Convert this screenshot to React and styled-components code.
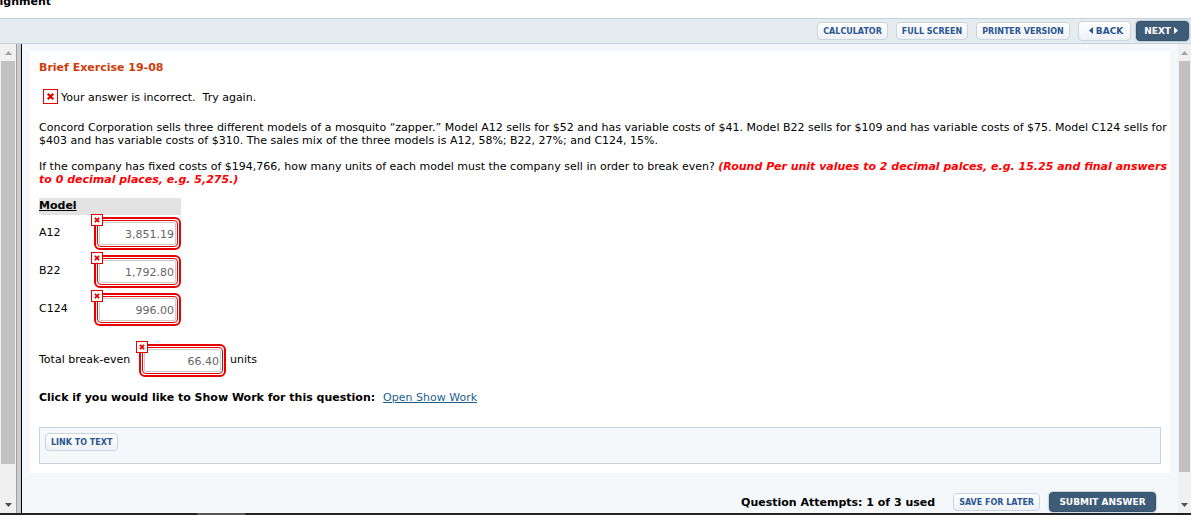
import React, { useState } from 'react';
import styled, { createGlobalStyle, css } from 'styled-components';

const GlobalStyle = createGlobalStyle`
    * {
        box-sizing: border-box;
    }

    body {
        margin: 0;
        background: #fff;
        color: #000;
        font: 11px/13px 'DejaVu Sans', Verdana, sans-serif;
    }

    h1, h2, p {
        margin: 0;
        font-size: 11px;
    }

    button, input {
        font-family: inherit;
    }
`;

const Page = styled.div`
    display: flex;
    flex-direction: column;
    min-height: 100vh;
`;

const TitleBar = styled.header`
    display: flex;
    justify-content: flex-end;
    width: 51px;
    height: 18px;
    overflow: hidden;

    h1 {
        line-height: 4px;
    }
`;

const Toolbar = styled.nav`
    display: flex;
    align-items: center;
    justify-content: flex-end;
    gap: 8px;
    height: 26px;
    padding: 0 2px;
    background: #e6ebef;
    border: solid #c6d1dc;
    border-width: 1px 0;
`;

const StepButtons = styled.div`
    display: flex;
    gap: 5px;
`;

const Button = styled.button`
    flex: none;
    height: 18px;
    padding: 1px 5px 0;
    border: 1px solid #cbd5e0;
    border-radius: 4px;
    background: linear-gradient(#fff, #eef1f5);
    color: #2a5591;
    font-size: 8px;
    font-weight: bold;
    line-height: 15px;
    white-space: nowrap;
    cursor: pointer;

    ${({ $large }) =>
        $large &&
        css`
            height: 20px;
            padding: 0 7px;
            font-size: 9px;
            line-height: 16px;
        `}

    ${({ $primary }) =>
        $primary &&
        css`
            border-color: #36536d;
            background: #3e5c78;
            box-shadow: 0 0 2px #6d88a1;
            color: #fff;
        `}
`;

const Arrow = styled.svg`
    width: 4px;
    height: 7px;
    margin: 0 3px;
    fill: currentColor;
`;

const Workspace = styled.div`
    display: flex;
    flex: 1;
`;

const ScrollTrack = styled.div`
    display: flex;
    flex-direction: column;
    flex: none;
    align-items: center;
    width: ${({ $width }) => $width}px;
    padding: 0 1px;
    background: #f0f0f0;

    svg {
        flex: none;
        width: 7px;
        height: 17px;
    }
`;

const ScrollThumb = styled.div`
    flex: 1;
    align-self: stretch;
    margin-bottom: ${({ $rest }) => $rest}px;
    background: #c1c1c1;
`;

const Splitter = styled.div`
    flex: none;
    width: 6px;
    background: #ccc;
    border-left: 1px solid #a0a0a0;
    border-right: 1px solid #000;
`;

const Main = styled.main`
    flex: 1;
    min-width: 0;
    padding: 7px 8px 0;
    background: #f5f8fb;
`;

const Card = styled.section`
    padding: 10px 0 9px 9px;
    background: #fff;
`;

const ExerciseTitle = styled.h2`
    color: #cf3c0b;
`;

const Feedback = styled.p`
    display: flex;
    align-items: flex-end;
    gap: 3px;
    margin: 15px 0 17px 4px;
    white-space: pre;
`;

const Cross = styled.svg`
    flex: none;
    width: ${({ $size }) => $size}px;
    height: ${({ $size }) => $size}px;
    background: #fff;
    border: 1px solid #e60000;
    stroke: #e60000;
    stroke-width: 1.6;
`;

const Question = styled.p`
    & + & {
        margin-top: 13px;
    }

    em {
        color: #f00;
        font-weight: bold;
    }
`;

const AnswerTable = styled.table`
    width: 142px;
    margin-top: 12px;
    border-collapse: collapse;

    th,
    td {
        padding: 0;
        text-align: left;
        font-weight: normal;
    }

    thead th {
        height: 17px;
        padding-bottom: 2px;
        background: #e3e3e3;
        font-weight: bold;
        text-decoration: underline;
    }

    tbody tr {
        height: 38px;
    }

    tbody th {
        padding-bottom: 4px;
    }

    td {
        width: 87px;
        padding-bottom: 1px;
    }
`;

const AnswerFrame = styled.span`
    position: relative;
    display: block;
    width: 87px;
    padding: 3px;
    border: 2px solid #e60000;
    border-radius: 6px;

    svg {
        position: absolute;
        top: -5px;
        left: -5px;
    }
`;

const AnswerInput = styled.input`
    display: block;
    width: 100%;
    height: 23px;
    padding: 1px 1px 0;
    border: 1px solid #ccc;
    outline: 1px solid #e60000;
    outline-offset: 1px;
    border-radius: 2px;
    color: #666;
    font-size: 11px;
    text-align: right;
`;

const TotalRow = styled.div`
    display: flex;
    align-items: center;
    margin-top: 15px;
`;

const TotalLabel = styled.label`
    width: 100px;
    padding-bottom: 3px;
`;

const Unit = styled.span`
    margin-left: 4px;
    padding-bottom: 3px;
`;

const ShowWork = styled.p`
    display: flex;
    gap: 8px;
    margin: 14px 0 23px;

    a {
        color: #1c5f8f;
    }
`;

const LinkPanel = styled.div`
    height: 37px;
    margin-right: 9px;
    padding: 5px;
    background: #f5f8fb;
    border: 1px solid #c8d1e0;
`;

const Footer = styled.footer`
    display: flex;
    align-items: center;
    justify-content: flex-end;
    padding: 19px 14px 0;

    strong {
        margin-right: 18px;
    }

    button + button {
        min-width: 107px;
        margin-left: 9px;
    }
`;

const Taskbar = styled.div`
    height: 2px;
    padding-left: 197px;
    background: #222326;

    &::before {
        content: '';
        display: block;
        width: 48px;
        height: 2px;
        background: #55565a;
    }
`;

const WrongMark = ({ size }) => (
    <Cross $size={size} viewBox="0 0 9 9" aria-hidden="true">
        <path d="M2.6 2.6 6.4 6.4M6.4 2.6 2.6 6.4" />
    </Cross>
);

const Scrollbar = ({ width, rest }) => (
    <ScrollTrack $width={width} aria-hidden="true">
        <svg viewBox="0 0 7 17">
            <path d="M0 11 3.5 7 7 11Z" fill="#a3a3a3" />
        </svg>
        <ScrollThumb $rest={rest} />
        <svg viewBox="0 0 7 17">
            <path d="M0 7 3.5 11 7 7Z" fill="#505050" />
        </svg>
    </ScrollTrack>
);

const AnswerField = ({ id, value, onChange }) => (
    <AnswerFrame>
        <AnswerInput id={id} value={value} onChange={(e) => onChange(id, e.target.value)} />
        <WrongMark size={12} />
    </AnswerFrame>
);

const models = ['A12', 'B22', 'C124'];

const App = () => {
    const [answers, setAnswers] = useState({
        A12: '3,851.19',
        B22: '1,792.80',
        C124: '996.00',
        total: '66.40',
    });
    const setAnswer = (id, value) => setAnswers({ ...answers, [id]: value });

    return (
        <Page>
            <GlobalStyle />
            <TitleBar>
                <h1>Assignment</h1>
            </TitleBar>
            <Toolbar>
                <Button>CALCULATOR</Button>
                <Button>FULL SCREEN</Button>
                <Button>PRINTER VERSION</Button>
                <StepButtons>
                    <Button $large>
                        <Arrow viewBox="0 0 4 7">
                            <path d="M4 0V7L0 3.5Z" />
                        </Arrow>
                        BACK
                    </Button>
                    <Button $large $primary>
                        NEXT
                        <Arrow viewBox="0 0 4 7">
                            <path d="M0 0V7L4 3.5Z" />
                        </Arrow>
                    </Button>
                </StepButtons>
            </Toolbar>
            <Workspace>
                <Scrollbar width={16} rest={32} />
                <Splitter />
                <Main>
                    <Card>
                        <ExerciseTitle>Brief Exercise 19-08</ExerciseTitle>
                        <Feedback>
                            <WrongMark size={15} />
                            {'Your answer is incorrect.  Try again.'}
                        </Feedback>
                        <Question>
                            Concord Corporation sells three different models of a mosquito “zapper.” Model A12 sells for
                            $52 and has variable costs of $41. Model B22 sells for $109 and has variable costs of $75.
                            Model C124 sells for $403 and has variable costs of $310. The sales mix of the three models
                            is A12, 58%; B22, 27%; and C124, 15%.
                        </Question>
                        <Question>
                            If the company has fixed costs of $194,766, how many units of each model must the company
                            sell in order to break even?{' '}
                            <em>
                                (Round Per unit values to 2 decimal palces, e.g. 15.25 and final answers to 0 decimal
                                places, e.g. 5,275.)
                            </em>
                        </Question>
                        <AnswerTable>
                            <thead>
                                <tr>
                                    <th colSpan={2}>Model</th>
                                </tr>
                            </thead>
                            <tbody>
                                {models.map((model) => (
                                    <tr key={model}>
                                        <th>
                                            <label htmlFor={model}>{model}</label>
                                        </th>
                                        <td>
                                            <AnswerField id={model} value={answers[model]} onChange={setAnswer} />
                                        </td>
                                    </tr>
                                ))}
                            </tbody>
                        </AnswerTable>
                        <TotalRow>
                            <TotalLabel htmlFor="total">Total break-even</TotalLabel>
                            <AnswerField id="total" value={answers.total} onChange={setAnswer} />
                            <Unit>units</Unit>
                        </TotalRow>
                        <ShowWork>
                            <strong>Click if you would like to Show Work for this question:</strong>
                            <a href="#show-work">Open Show Work</a>
                        </ShowWork>
                        <LinkPanel>
                            <Button>LINK TO TEXT</Button>
                        </LinkPanel>
                    </Card>
                    <Footer>
                        <strong>Question Attempts: 1 of 3 used</strong>
                        <Button>SAVE FOR LATER</Button>
                        <Button $large $primary>
                            SUBMIT ANSWER
                        </Button>
                    </Footer>
                </Main>
                <Scrollbar width={13} rest={24} />
            </Workspace>
            <Taskbar />
        </Page>
    );
};

export default App;
